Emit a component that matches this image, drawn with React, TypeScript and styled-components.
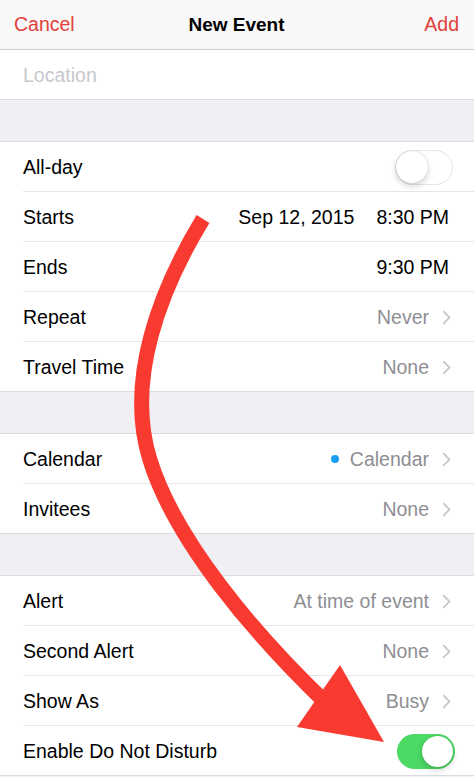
import React from 'react';
import styled, { createGlobalStyle } from 'styled-components';

const GlobalStyle = createGlobalStyle`
  html, body {
    margin: 0;
    padding: 0;
    background: #efeff4;
  }
  body {
    font-family: "Liberation Sans", Arial, sans-serif;
    -webkit-font-smoothing: antialiased;
  }
`;

const Screen = styled.div`
  position: relative;
  width: 474px;
  min-height: 777px;
  background: #efeff4;
  overflow: hidden;
`;

const NavBar = styled.div`
  height: 49px;
  display: grid;
  grid-template-columns: 1fr auto 1fr;
  align-items: center;
  padding: 0 15px 0 14px;
  background: #f8f8f8;
  border-bottom: 1px solid #cfcfd3;
`;

const NavButton = styled.span<{ $align?: 'left' | 'right' }>`
  justify-self: ${p => (p.$align === 'right' ? 'end' : 'start')};
  font-size: 19.5px;
  color: #e2403a;
`;

const NavTitle = styled.span`
  font-size: 19px;
  font-weight: 700;
  color: #000;
`;

const Group = styled.div`
  background: #fff;
`;

const Gap = styled.div`
  height: 41px;
  border-bottom: 1px solid #dcdce0;
`;

const Row = styled.div<{ $last?: boolean; $pad?: number }>`
  box-sizing: border-box;
  height: 50px;
  display: flex;
  align-items: center;
  padding-left: 23px;
  padding-right: ${p => p.$pad ?? 23}px;
  position: relative;

  &::after {
    content: '';
    position: absolute;
    bottom: 0;
    right: 0;
    left: ${p => (p.$last ? 0 : 23)}px;
    height: 1px;
    background: ${p => (p.$last ? '#dcdce0' : '#e6e6e9')};
  }
`;

const Label = styled.span`
  flex: 1;
  font-size: 19.5px;
  color: #000;
`;

const Placeholder = styled.span`
  font-size: 19.5px;
  color: #c7c7cd;
`;

const Value = styled.span<{ $dark?: boolean }>`
  font-size: 19.5px;
  color: ${p => (p.$dark ? '#000' : '#8e8e93')};
`;

const DateGroup = styled.div`
  display: flex;
  gap: 22px;
`;

const Dot = styled.span`
  width: 8px;
  height: 8px;
  border-radius: 50%;
  background: #1a9ef2;
  margin-right: 11px;
`;

const Chevron = () => (
  <svg width="9" height="15" viewBox="0 0 9 15" style={{ marginLeft: 13 }}>
    <path d="M1.2 1.2 L7.5 7.5 L1.2 13.8" fill="none" stroke="#c7c7cc" strokeWidth="1.8" />
  </svg>
);

const Track = styled.div<{ $on?: boolean }>`
  box-sizing: border-box;
  width: 58px;
  height: 35px;
  border-radius: 18px;
  background: ${p => (p.$on ? '#4cd964' : '#fff')};
  border: ${p => (p.$on ? 'none' : '1.5px solid #e5e5ea')};
  position: relative;
  margin-right: -1px;
`;

const Knob = styled.div<{ $on?: boolean }>`
  position: absolute;
  top: ${p => (p.$on ? 2 : 0)}px;
  ${p => (p.$on ? 'right: 2px;' : 'left: 0;')}
  width: ${p => (p.$on ? 31 : 32)}px;
  height: ${p => (p.$on ? 31 : 32)}px;
  border-radius: 50%;
  background: #fff;
  box-shadow: 0 3px 6px rgba(0, 0, 0, 0.18), 0 0 1px rgba(0, 0, 0, 0.25);
`;

const Toggle = ({ on }: { on?: boolean }) => (
  <Track $on={on}>
    <Knob $on={on} />
  </Track>
);

const ArrowLayer = styled.svg`
  position: absolute;
  top: 0;
  left: 0;
  pointer-events: none;
`;

type Item = { label: string; value?: string; dot?: boolean };

const Detail = ({ label, value, dot, last }: Item & { last?: boolean }) => (
  <Row $last={last}>
    <Label>{label}</Label>
    {dot && <Dot />}
    <Value>{value}</Value>
    <Chevron />
  </Row>
);

const calendarRows: Item[] = [
  { label: 'Calendar', value: 'Calendar', dot: true },
  { label: 'Invitees', value: 'None' },
];

const alertRows: Item[] = [
  { label: 'Alert', value: 'At time of event' },
  { label: 'Second Alert', value: 'None' },
  { label: 'Show As', value: 'Busy' },
];

export default function App() {
  return (
    <>
      <GlobalStyle />
      <Screen>
        <NavBar>
          <NavButton>Cancel</NavButton>
          <NavTitle>New Event</NavTitle>
          <NavButton $align="right">Add</NavButton>
        </NavBar>

        <Group>
          <Row $last>
            <Placeholder>Location</Placeholder>
          </Row>
        </Group>
        <Gap />

        <Group>
          <Row $pad={22}>
            <Label>All-day</Label>
            <Toggle />
          </Row>
          <Row $pad={25}>
            <Label>Starts</Label>
            <DateGroup>
              <Value $dark>Sep 12, 2015</Value>
              <Value $dark>8:30 PM</Value>
            </DateGroup>
          </Row>
          <Row $pad={25}>
            <Label>Ends</Label>
            <Value $dark>9:30 PM</Value>
          </Row>
          <Detail label="Repeat" value="Never" />
          <Detail label="Travel Time" value="None" last />
        </Group>
        <Gap />

        <Group>
          {calendarRows.map((r, i) => (
            <Detail key={r.label} {...r} last={i === calendarRows.length - 1} />
          ))}
        </Group>
        <Gap />

        <Group>
          {alertRows.map(r => (
            <Detail key={r.label} {...r} />
          ))}
          <Row $pad={20} $last>
            <Label>Enable Do Not Disturb</Label>
            <Toggle on />
          </Row>
        </Group>

        {/* callout arrow sweeping down to the Do Not Disturb switch */}
        <ArrowLayer width="474" height="777" viewBox="0 0 474 777">
          <path
            d="M203 219 C160 290 125 380 150 460 C175 540 252 632 326 703"
            fill="none"
            stroke="#f93a30"
            strokeWidth="15"
          />
          <polygon points="340,665 297,727 384,742" fill="#f93a30" />
        </ArrowLayer>
      </Screen>
    </>
  );
}
